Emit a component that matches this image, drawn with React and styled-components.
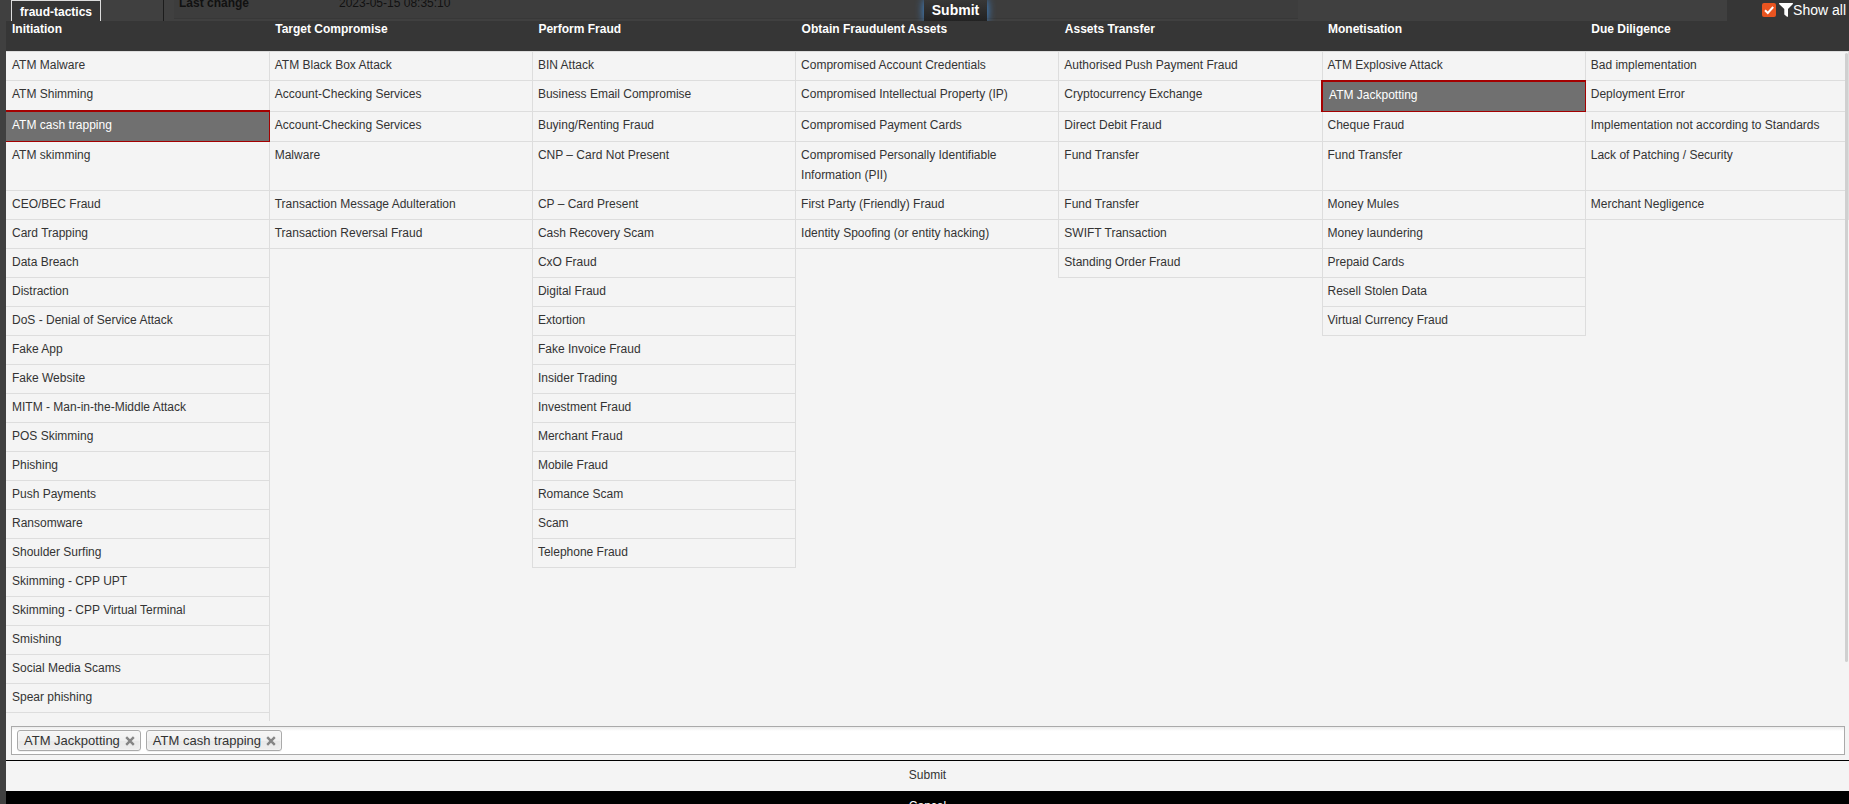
import * as React from "react";
import styled, { createGlobalStyle } from "styled-components";

const columns = [
  {
    name: "Initiation",
    items: [
      "ATM Malware",
      "ATM Shimming",
      "ATM cash trapping",
      "ATM skimming",
      "CEO/BEC Fraud",
      "Card Trapping",
      "Data Breach",
      "Distraction",
      "DoS - Denial of Service Attack",
      "Fake App",
      "Fake Website",
      "MITM - Man-in-the-Middle Attack",
      "POS Skimming",
      "Phishing",
      "Push Payments",
      "Ransomware",
      "Shoulder Surfing",
      "Skimming - CPP UPT",
      "Skimming - CPP Virtual Terminal",
      "Smishing",
      "Social Media Scams",
      "Spear phishing",
      "Vishing",
    ],
  },
  {
    name: "Target Compromise",
    items: [
      "ATM Black Box Attack",
      "Account-Checking Services",
      "Account-Checking Services",
      "Malware",
      "Transaction Message Adulteration",
      "Transaction Reversal Fraud",
    ],
  },
  {
    name: "Perform Fraud",
    items: [
      "BIN Attack",
      "Business Email Compromise",
      "Buying/Renting Fraud",
      "CNP – Card Not Present",
      "CP – Card Present",
      "Cash Recovery Scam",
      "CxO Fraud",
      "Digital Fraud",
      "Extortion",
      "Fake Invoice Fraud",
      "Insider Trading",
      "Investment Fraud",
      "Merchant Fraud",
      "Mobile Fraud",
      "Romance Scam",
      "Scam",
      "Telephone Fraud",
    ],
  },
  {
    name: "Obtain Fraudulent Assets",
    items: [
      "Compromised Account Credentials",
      "Compromised Intellectual Property (IP)",
      "Compromised Payment Cards",
      "Compromised Personally Identifiable Information (PII)",
      "First Party (Friendly) Fraud",
      "Identity Spoofing (or entity hacking)",
    ],
  },
  {
    name: "Assets Transfer",
    items: [
      "Authorised Push Payment Fraud",
      "Cryptocurrency Exchange",
      "Direct Debit Fraud",
      "Fund Transfer",
      "Fund Transfer",
      "SWIFT Transaction",
      "Standing Order Fraud",
    ],
  },
  {
    name: "Monetisation",
    items: [
      "ATM Explosive Attack",
      "ATM Jackpotting",
      "Cheque Fraud",
      "Fund Transfer",
      "Money Mules",
      "Money laundering",
      "Prepaid Cards",
      "Resell Stolen Data",
      "Virtual Currency Fraud",
    ],
  },
  {
    name: "Due Diligence",
    items: [
      "Bad implementation",
      "Deployment Error",
      "Implementation not according to Standards",
      "Lack of Patching / Security",
      "Merchant Negligence",
    ],
  },
];

const picked = ["ATM Jackpotting", "ATM cash trapping"];

const GlobalStyle = createGlobalStyle`
* {
  box-sizing: border-box;
}

body {
  margin: 0;
  overflow: hidden;
  background: #404040;
  color: #333;
  font-family: "Liberation Sans", Arial, sans-serif;
  font-size: 12px;
  line-height: 20px;
}
`;

const Page = styled.div`
  height: 100vh;
  overflow: hidden;
`;

/* the dimmed event page that shows above the popup */
const Backdrop = styled.div`
  position: absolute;
  top: 0;
  left: 0;
  right: 0;
  height: 21px;
  display: flex;
  overflow: hidden;
  padding-right: 122px;
  background: linear-gradient(#363636, #363636) right / 122px 100% no-repeat #404040;
`;

const SideMenu = styled.div`
  flex: none;
  width: 164px;
  border-right: 1px solid #1c1c1c;
`;

const EventInfo = styled.dl`
  display: flex;
  width: 1124px;
  height: 19px;
  margin: 0 0 0 10px;
  padding-left: 5px;
  border-bottom: 1px solid #383838;
  background: #3d3d3d;
  color: #111;
  line-height: 6px;

  dt {
    width: 160px;
    font-weight: bold;
  }

  dd {
    margin: 0;
  }
`;

const Popup = styled.main`
  position: relative;
  margin-left: 6px;
`;

const TopBar = styled.div`
  display: grid;
  grid-template-columns: 1fr auto 1fr;
  height: 21px;
`;

const Tab = styled.button`
  justify-self: start;
  height: 21px;
  margin-left: 5px;
  padding: 1px 8px 0;
  border: 1px solid #ddd;
  border-bottom: 0;
  background: #363636;
  color: #fff;
  font: bold 12px/20px "Liberation Sans", Arial, sans-serif;
`;

const TopSubmit = styled.button`
  height: 21px;
  margin-left: 56px;
  padding: 0 8px 2px;
  border: 0;
  background: linear-gradient(#383838, #222);
  box-shadow: 0 0 8px #3f8fe0;
  color: #fff;
  font: bold 14px/20px "Liberation Sans", Arial, sans-serif;
`;

const ShowAll = styled.label`
  justify-self: end;
  display: flex;
  align-items: center;
  height: 19px;
  padding-right: 3px;
  color: #fff;
  font-size: 14px;

  svg {
    margin-left: 3px;
  }
`;

const CheckBox = styled.input`
  appearance: none;
  width: 14px;
  height: 14px;
  margin: 0;
  border-radius: 2px;
  background: #e95420;

  &:checked {
    background: #e95420
      url("data:image/svg+xml,%3Csvg xmlns='http://www.w3.org/2000/svg' viewBox='0 0 14 14'%3E%3Cpath d='M3 7.2l2.8 2.8L11.2 4' fill='none' stroke='white' stroke-width='2'/%3E%3C/svg%3E");
  }
`;

const Matrix = styled.div`
  position: relative;
  height: calc(100vh - 104px);
  overflow: hidden;
  background: #f4f4f4;
`;

const Table = styled.table`
  width: 100%;
  table-layout: fixed;
  border-collapse: collapse;
`;

const HeadCell = styled.th`
  height: 30px;
  padding: 0 6px;
  background: #363636;
  color: #fff;
  text-align: left;
  vertical-align: top;
  line-height: 16px;
`;

const Cell = styled.td`
  padding: 3px 5px 5px;
  border: ${(p) => (p.$empty ? "0" : "1px solid #ddd")};
  vertical-align: top;

  &:first-child {
    padding-left: 6px;
    border-left: 0;
  }
`;

const PickedCell = styled(Cell)`
  padding: 3px 6px 6px;
  border-color: #a40000;
  border-width: 2px 1px 1px 2px;
  background: #707070;
  color: #fff;
`;

const ScrollThumb = styled.div`
  position: absolute;
  top: 32px;
  right: 1px;
  width: 3px;
  height: calc(100% - 91px);
  border-radius: 2px;
  background: #d0d0d0;
`;

const Choices = styled.div`
  padding: 5px 4px 5px 5px;
  background: #f4f4f4;
`;

const ChoiceBox = styled.ul`
  display: flex;
  align-items: center;
  gap: 5px;
  height: 29px;
  margin: 0;
  padding: 0 5px;
  border: 1px solid #aaa;
  background: linear-gradient(#eee 1%, #fff 15%);
  list-style: none;
`;

const Choice = styled.li`
  display: flex;
  align-items: center;
  gap: 5px;
  height: 21px;
  padding: 0 5px 0 6px;
  border: 1px solid #aaa;
  border-radius: 3px;
  background: linear-gradient(#f4f4f4 20%, #f0f0f0 50%, #e8e8e8 52%, #eee);
  box-shadow: 0 0 2px #fff inset, 0 1px 0 rgba(0, 0, 0, 0.05);
  font-size: 13px;
  line-height: 18px;
`;

const Remove = styled.button`
  display: flex;
  padding: 0;
  border: 0;
  background: none;
`;

const Action = styled.button`
  display: block;
  width: 100%;
  height: 31px;
  padding: 0 0 2px;
  border: 0;
  border-top: 1px solid #000;
  background: ${(p) => (p.$dark ? "#000" : "#f4f4f4")};
  color: ${(p) => (p.$dark ? "#fff" : "#333")};
  font: 12px/20px "Liberation Sans", Arial, sans-serif;
`;

const FunnelIcon = () => (
  <svg width="14" height="14" viewBox="0 0 14 14" fill="#fff" aria-hidden="true">
    <path d="M.3 0h13.4c.4.3.4.8 0 1.2L9 6v7.4c-.2.5-.6.6-1 .3L5.300 11.500V6L.3 1.200C-.1.800-.1.300.3 0z" />
  </svg>
);

const CrossIcon = () => (
  <svg width="10" height="10" viewBox="0 0 10 10" stroke="#858585" strokeWidth="2.4" aria-hidden="true">
    <path d="M1.200 1.200l7.600 7.600M8.800 1.200L1.200 8.800" />
  </svg>
);

const MatrixTable = () => {
  const rows = Math.max(...columns.map((c) => c.items.length));

  return (
    <Table>
      <thead>
        <tr>
          {columns.map((c) => (
            <HeadCell key={c.name} scope="col">
              {c.name}
            </HeadCell>
          ))}
        </tr>
      </thead>
      <tbody>
        {Array.from({ length: rows }, (_, i) => (
          <tr key={i}>
            {columns.map((c) => {
              const item = c.items[i];
              if (picked.includes(item)) {
                return <PickedCell key={c.name}>{item}</PickedCell>;
              }
              return (
                <Cell key={c.name} $empty={!item}>
                  {item}
                </Cell>
              );
            })}
          </tr>
        ))}
      </tbody>
    </Table>
  );
};

const App = () => (
  <Page>
    <GlobalStyle />
    <Backdrop>
      <SideMenu />
      <EventInfo>
        <dt>Last change</dt>
        <dd>2023-05-15 08:35:10</dd>
      </EventInfo>
    </Backdrop>

    <Popup>
      <TopBar>
        <Tab type="button">fraud-tactics</Tab>
        <TopSubmit type="button">Submit</TopSubmit>
        <ShowAll htmlFor="show-all">
          <CheckBox id="show-all" type="checkbox" defaultChecked />
          <FunnelIcon />
          Show all
        </ShowAll>
      </TopBar>

      <Matrix>
        <MatrixTable />
        <ScrollThumb />
      </Matrix>

      <Choices>
        <ChoiceBox>
          {picked.map((name) => (
            <Choice key={name}>
              {name}
              <Remove type="button" aria-label={`Remove ${name}`}>
                <CrossIcon />
              </Remove>
            </Choice>
          ))}
        </ChoiceBox>
      </Choices>

      <Action type="button">Submit</Action>
      <Action type="button" $dark>
        Cancel
      </Action>
    </Popup>
  </Page>
);

export default App;
